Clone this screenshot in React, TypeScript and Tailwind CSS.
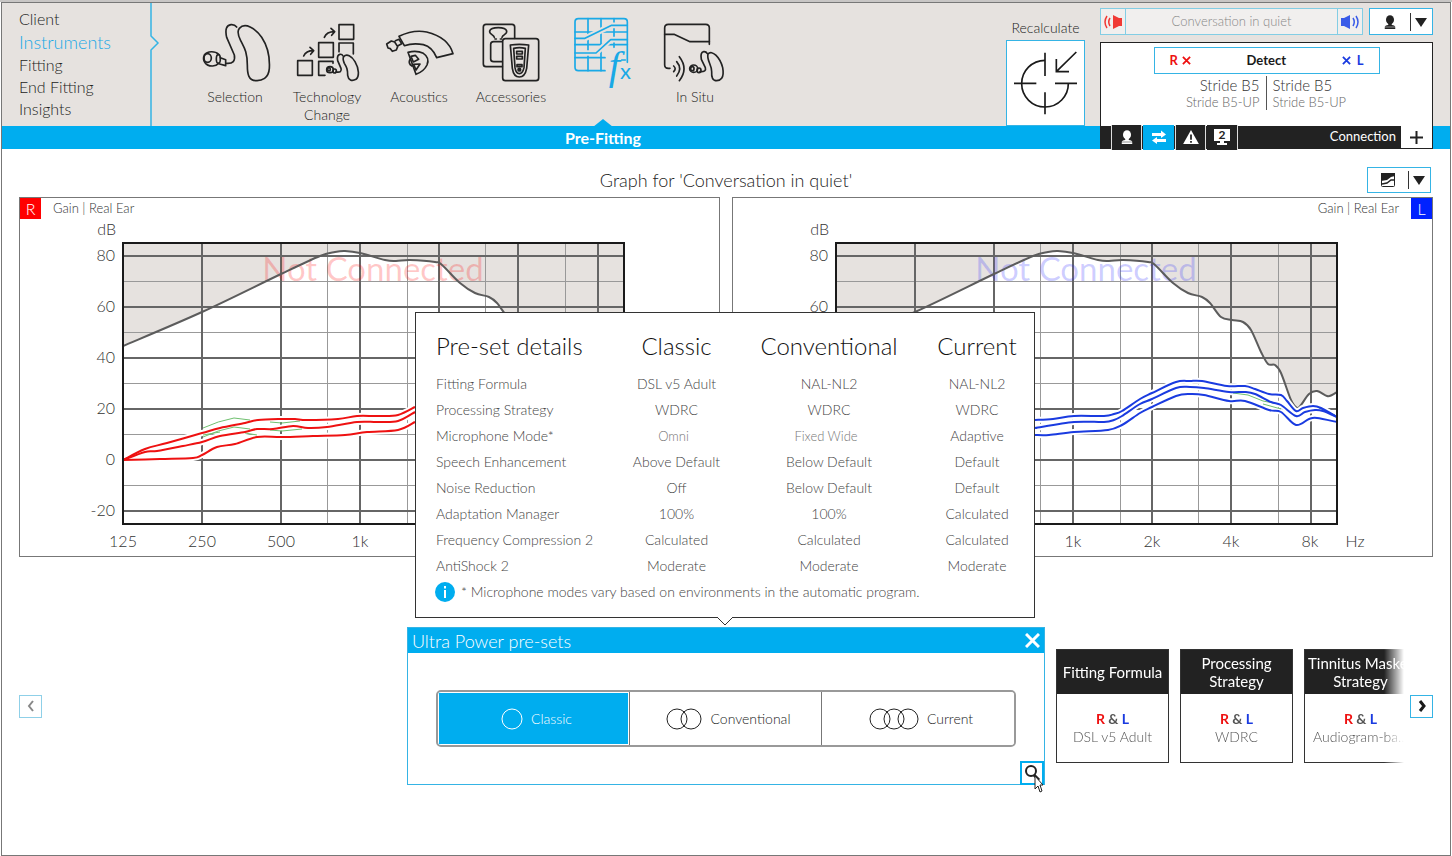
import React, { useState } from 'react';
import clsx from 'clsx';

type Point = [number, number];

const NAV_ITEMS = ['Client', 'Instruments', 'Fitting', 'End Fitting', 'Insights'];

const DETAILS = [
    ['Fitting Formula', 'DSL v5 Adult', 'NAL-NL2', 'NAL-NL2'],
    ['Processing Strategy', 'WDRC', 'WDRC', 'WDRC'],
    ['Microphone Mode*', 'Omni', 'Fixed Wide', 'Adaptive'],
    ['Speech Enhancement', 'Above Default', 'Below Default', 'Default'],
    ['Noise Reduction', 'Off', 'Below Default', 'Default'],
    ['Adaptation Manager', '100%', '100%', 'Calculated'],
    ['Frequency Compression 2', 'Calculated', 'Calculated', 'Calculated'],
    ['AntiShock 2', 'Moderate', 'Moderate', 'Moderate'],
];

const CARDS = [
    { title: 'Fitting Formula', value: 'DSL v5 Adult' },
    { title: 'Processing Strategy', value: 'WDRC' },
    { title: 'Tinnitus Masker Strategy', value: 'Audiogram-ba...' },
];

const LIMIT: Point[] = [
    [103, 127], [182, 93], [261, 55], [300, 37], [315, 33], [325, 32], [340, 34], [365, 41], [376, 42],
    [390, 41], [415, 43], [422, 46], [440, 64], [455, 74], [469, 78], [477, 84], [488, 98], [499, 101],
    [510, 103], [518, 111], [528, 133], [535, 145], [542, 146], [548, 154], [558, 181], [564, 189],
    [568, 186], [576, 175], [584, 172], [594, 177], [599, 176], [604, 173],
];

const RIGHT_CURVES: Point[][] = [
    [
        [103, 241], [125, 230], [147, 224], [182, 214], [200, 209], [225, 204], [238, 201], [262, 200],
        [275, 200], [287, 201], [318, 200], [337, 197], [358, 197], [378, 196], [395, 188],
    ],
    [
        [103, 241], [125, 233], [137, 232], [163, 227], [182, 223], [200, 217], [225, 213], [237, 210],
        [253, 210], [273, 207], [288, 209], [307, 208], [337, 203], [358, 203], [378, 202], [395, 193],
    ],
    [
        [103, 241], [140, 240], [173, 239], [182, 236], [197, 228], [215, 225], [237, 218], [262, 218],
        [293, 217], [325, 216], [347, 213], [378, 211], [395, 203],
    ],
];

const LEFT_CURVES: Point[][] = [
    [
        [302, 201], [320, 200], [341, 197], [371, 197], [381, 195], [389, 192], [407, 180], [419, 174],
        [443, 163], [457, 162], [469, 162], [494, 167], [512, 167], [522, 170], [536, 175], [548, 176],
        [554, 182], [563, 192], [570, 189], [580, 187], [588, 189], [604, 198],
    ],
    [
        [302, 209], [341, 203], [371, 203], [381, 201], [389, 197], [407, 185], [419, 180], [443, 169],
        [457, 168], [471, 169], [496, 173], [512, 173], [522, 175], [538, 183], [548, 186], [563, 197],
        [572, 193], [582, 191], [590, 192], [604, 198],
    ],
    [
        [302, 216], [316, 216], [341, 213], [375, 211], [389, 206], [407, 194], [419, 188], [443, 177],
        [457, 175], [471, 176], [496, 182], [512, 182], [536, 191], [548, 193], [563, 206], [576, 200],
        [584, 199], [604, 203],
    ],
];

const RIGHT_TARGETS = [
    'M183 209 Q198 202 214 199 L230 201 M250 203 L262 204 L280 202',
    'M183 218 Q198 211 214 208 L230 210 M250 211 L262 212 L282 210',
    'M183 216 L200 213 M225 214 L237 216',
];
const LEFT_TARGETS = ['M500 174 L515 176 L530 182 L546 185', 'M530 185 L548 190', 'M586 189 L602 196'];

// Catmull-Rom through the measured points
const smooth = (pts: Point[]) =>
    pts.reduce((d, p, i) => {
        if (i === 0) return `M${p[0]} ${p[1]}`;
        const a = pts[i - 2] ?? pts[i - 1];
        const b = pts[i - 1];
        const c = pts[i + 1] ?? p;
        return `${d} C${b[0] + (p[0] - a[0]) / 6} ${b[1] + (p[1] - a[1]) / 6} ${p[0] - (c[0] - b[0]) / 6} ${
            p[1] - (c[1] - b[1]) / 6
        } ${p[0]} ${p[1]}`;
    }, '');

const X_MAJOR = [182, 261, 340, 419, 498, 578];
const X_MINOR = [307, 387, 465, 545];
const Y_MAJOR = [37, 88, 139, 190, 241, 292];
const Y_MINOR = [62, 113, 164, 215, 266];

interface ChartProps {
    side: 'R' | 'L';
    curves: Point[][];
    targets: string[];
}

const GainChart: React.FC<ChartProps> = ({ side, curves, targets }) => {
    const right = side === 'R';
    const limit = smooth(LIMIT);

    return (
        <section className="border border-[#777777] bg-white">
            <div className={clsx('flex h-[21px] items-center gap-3', !right && 'flex-row-reverse')}>
                <span
                    className={clsx(
                        'flex h-[21px] w-[21px] items-center justify-center text-base text-white',
                        right ? 'bg-[#ff0000]' : 'bg-[#0022ff]'
                    )}
                >
                    {side}
                </span>
                <span className="text-[13px] text-[#333333]">Gain | Real Ear</span>
            </div>
            <svg viewBox="0 0 699 337" className="block w-full" role="img" aria-label="Gain graph">
                <path d={`${limit} V24 H103 Z`} fill="#e6e2df" />
                <g stroke="#999999" strokeWidth="1">
                    {X_MINOR.map((x) => (
                        <path key={x} d={`M${x + 0.5} 24 V305`} />
                    ))}
                    {Y_MINOR.map((y) => (
                        <path key={y} d={`M103 ${y + 0.5} H604`} />
                    ))}
                </g>
                <g stroke="#666666" strokeWidth="2">
                    {X_MAJOR.map((x) => (
                        <path key={x} d={`M${x} 24 V305`} />
                    ))}
                    {Y_MAJOR.map((y) => (
                        <path key={y} d={`M103 ${y} H604`} />
                    ))}
                </g>
                <text
                    x="353"
                    y="62"
                    textAnchor="middle"
                    fontSize="33"
                    fontWeight="400"
                    fill={right ? '#ff0000' : '#2222ff'}
                    fillOpacity="0.22"
                >
                    Not Connected
                </text>
                <path d={limit} fill="none" stroke="#5c5c5c" strokeWidth="2" />
                {curves.map((c, i) => (
                    <path key={i} d={smooth(c)} fill="none" stroke="#ffffff" strokeWidth="6" />
                ))}
                {targets.map((t) => (
                    <path key={t} d={t} fill="none" stroke="#6fc06f" strokeWidth="1" />
                ))}
                {curves.map((c, i) => (
                    <path key={i} d={smooth(c)} fill="none" stroke={right ? '#ee1111' : '#1a3be0'} strokeWidth="2" />
                ))}
                <rect x="103" y="24" width="501" height="281" fill="none" stroke="#1a1a1a" strokeWidth="2" />
                <g fontSize="16" fill="#333333" textAnchor="end">
                    <text x="96" y="16">
                        dB
                    </text>
                    {[80, 60, 40, 20, 0, -20].map((v, i) => (
                        <text key={v} x="95" y={42 + i * 51}>
                            {v}
                        </text>
                    ))}
                </g>
                <g fontSize="16" fill="#333333" textAnchor="middle">
                    {['125', '250', '500', '1k', '2k', '4k', '8k'].map((v, i) => (
                        <text key={v} x={103 + i * 79} y="328">
                            {v}
                        </text>
                    ))}
                    <text x="622" y="328">
                        Hz
                    </text>
                </g>
            </svg>
        </section>
    );
};

interface ToolIconProps {
    box: string;
    children: React.ReactNode;
}

const ToolIcon: React.FC<ToolIconProps> = ({ box, children }) => (
    <svg
        viewBox={box}
        className="h-[75px] w-[92px] overflow-visible"
        fill="none"
        stroke="currentColor"
        strokeWidth="5"
        strokeLinecap="round"
        strokeLinejoin="round"
    >
        {children}
    </svg>
);

const TOOLS = [
    {
        label: 'Selection',
        icon: (
            <ToolIcon box="567 39 276 225">
                <path d="M680 190 Q708 192 703 165 L680 112 Q672 76 693 74 Q704 73 710 81" />
                <path d="M718 85 C735 66 765 84 785 112 C805 142 810 170 808 205 C806 235 785 243 768 242 C745 241 742 222 742 195 C742 155 732 142 722 122 C713 104 712 92 718 85Z" />
                <path d="M656 163 C646 153 622 152 613 165 C606 180 616 199 638 198 C648 197 653 193 656 190" />
                <ellipse cx="623" cy="174" rx="11" ry="13" />
                <ellipse cx="655" cy="177" rx="6" ry="13" />
                <path d="M661 173 L677 179 V197 L659 192" />
            </ToolIcon>
        ),
    },
    {
        label: 'Technology Change',
        icon: (
            <ToolIcon box="843 39 276 225">
                <rect x="893" y="182" width="44" height="44" />
                <rect x="956" y="128" width="44" height="44" />
                <rect x="1017" y="74" width="44" height="44" />
                <path d="M1017 155 V129 H1060 V162 M975 226 H956 V184 H999 V190" />
                <path d="M911 168 Q918 152 940 152 M930 142 L941 152 L932 163 M973 112 Q980 95 1003 95 M993 85 L1004 95 L995 106" />
                <path d="M1031 170 C1040 160 1055 168 1065 185 C1078 207 1078 230 1068 238 C1055 245 1045 240 1043 226 C1043 207 1040 202 1033 190 C1029 180 1028 174 1031 170Z" />
                <path d="M1008 216 Q1027 219 1023 205 L1013 182 Q1010 165 1020 163 Q1026 162 1029 168" />
                <ellipse cx="990" cy="209" rx="10" ry="9" />
                <ellipse cx="987" cy="208" rx="4" ry="5" />
                <ellipse cx="1004" cy="213" rx="5" ry="6" />
            </ToolIcon>
        ),
    },
    {
        label: 'Acoustics',
        icon: (
            <ToolIcon box="9 39 276 225">
                <path d="M87 109 Q130 88 170 96 Q235 112 249 161 L200 173 Q187 141 160 134 Q130 128 103 137 Z" />
                <path d="M50 132 L64 123 L74 126 L83 140 L79 150 L67 154 L61 146 L54 144 Z M76 122 L87 118 L95 131 L84 137" />
                <path d="M114 157 Q140 150 160 160 Q180 173 171 195 Q162 214 138 223 Z" />
                <path d="M123 169 L136 166 L146 178 L130 186 Z M131 193 L150 192 L138 210 Z M120 178 Q113 190 126 198" />
            </ToolIcon>
        ),
    },
    {
        label: 'Accessories',
        icon: (
            <ToolIcon box="285 39 276 225">
                <path d="M397 200 H348 Q340 200 340 192 V81 Q340 73 348 73 H426 Q434 73 434 81 V115" />
                <path d="M373 112 Q372 107 366 104 Q358 99 359 93 Q362 83 385 83 Q407 83 410 93 Q411 99 403 104 Q397 107 396 112 M375 117 H379 M391 117 H395" />
                <path d="M396 185 H371 Q362 185 362 177 V133 Q362 125 371 125 H396" />
                <rect x="398" y="116" width="108" height="126" rx="8" />
                <path d="M421 135 Q448 131 476 135 L470 205 Q465 231 448 231 Q431 231 427 205 Z" />
                <path d="M431 145 Q448 141 466 145 L462 203 Q458 221 448 221 Q438 221 435 203 Z" />
                <rect x="440" y="154" width="17" height="8" />
                <rect x="440" y="169" width="17" height="8" />
                <rect x="441" y="194" width="15" height="6" />
                <circle cx="448" cy="209" r="4" fill="currentColor" />
            </ToolIcon>
        ),
    },
    {
        label: 'Pre-Fitting',
        icon: (
            <ToolIcon box="561 39 276 225">
                <path d="M654 56 V212 M693 56 V212 M732 56 V142 M615 96 H772 M615 134 H772 M615 173 H705 M755 180 H766" />
                <path d="M618 115 H645 L725 76 H769 M618 159 H678 L722 119 H769" stroke="#e6e2df" strokeWidth="17" strokeLinecap="butt" />
                <path d="M615 115 H645 L725 76 H772 M615 159 H678 L722 119 H772" />
                <path d="M772 187 V66 Q772 56 762 56 H625 Q615 56 615 66 V202 Q615 212 625 212 H705" />
                <text
                    x="716"
                    y="237"
                    fontSize="122"
                    fontStyle="italic"
                    fontFamily="Liberation Serif, serif"
                    fill="currentColor"
                    stroke="none"
                >
                    f
                </text>
                <text x="750" y="237" fontSize="66" fontWeight="400" fill="currentColor" stroke="none">
                    x
                </text>
            </ToolIcon>
        ),
    },
    {
        label: 'In Situ',
        icon: (
            <ToolIcon box="837 39 276 225">
                <path d="M1018 133 V84 Q1018 73 1007 73 H895 Q884 73 884 84 V195 Q884 205 895 205 H900" />
                <path d="M884 103 H912 L960 125 H1018" />
                <path d="M911 198 Q920 206 911 215 M920 185 Q938 206 920 228 M928 170 Q956 206 928 242" />
                <path d="M1014 162 C1026 148 1050 172 1058 203 C1064 236 1050 242 1040 242 C1028 242 1024 232 1025 215 C1026 195 1009 180 1014 162Z" />
                <path d="M990 215 Q1010 216 1006 203 L994 178 Q990 157 1001 155 Q1008 154 1012 161" />
                <ellipse cx="971" cy="206" rx="12" ry="11" />
                <ellipse cx="967" cy="206" rx="5" ry="6" />
                <ellipse cx="987" cy="211" rx="6" ry="7" />
            </ToolIcon>
        ),
    },
];

const PersonIcon: React.FC = () => (
    <svg viewBox="0 0 16 16" className="h-[14px] w-[14px]" fill="currentColor">
        <ellipse cx="8" cy="5.5" rx="4.6" ry="5.2" />
        <path d="M6 9 H10 V11.5 Q14 12 14 13.5 H2 Q2 12 6 11.5 Z" />
        <rect x="2" y="14" width="12" height="2" />
    </svg>
);

const Speaker: React.FC<{ className: string }> = ({ className }) => (
    <svg viewBox="0 0 20 18" className={clsx('h-[18px] w-5', className)} fill="currentColor">
        <path d="M1 5 H4 L10 2 V16 L4 13 H1 Z" />
        <path d="M13 5 Q15.5 9 13 13 M16 3 Q20 9 16 15" fill="none" stroke="currentColor" strokeWidth="1.5" />
    </svg>
);

const SplitButton: React.FC<{ label: string; children: React.ReactNode; className?: string }> = ({
    label,
    children,
    className,
}) => (
    <button
        aria-label={label}
        className={clsx('flex w-16 items-center border border-[#35b4e5] bg-white text-[#222222]', className)}
    >
        <span className="flex flex-1 justify-center">{children}</span>
        <span className="h-[18px] w-px bg-[#333333]" />
        <svg viewBox="0 0 20 12" className="mr-px h-3 w-5" fill="currentColor">
            <path d="M4 2 H16 L10 11 Z" />
        </svg>
    </button>
);

const TAB = 'flex h-[25px] w-[31px] items-center justify-center text-white';

const Header: React.FC = () => (
    <header className="grid grid-cols-[148px_1fr_auto_auto] grid-rows-[123px_23px] bg-[#e6e2df]">
        <nav className="pt-[5px] pl-[17px]">
            <ul className="text-base text-[#222222]">
                {NAV_ITEMS.map((item) => {
                    const active = item === 'Instruments';
                    return (
                        <li key={item} className={clsx('flex items-center', active ? 'h-6' : 'h-[22px]')}>
                            <a href="#" className={active ? 'text-lg text-[#1aa9e6]' : ''}>
                                {item}
                            </a>
                        </li>
                    );
                })}
            </ul>
        </nav>
        <div className="flex">
            <svg viewBox="0 0 10 123" className="h-[123px] w-[10px]" fill="none" stroke="#35b4e5" strokeWidth="1.5">
                <path d="M1 0 V33 L8 40 L1 47 V123" />
            </svg>
            <div className="flex pt-[10px] pl-[29px]">
                {TOOLS.map(({ label, icon }) => {
                    const active = label === 'Pre-Fitting';
                    return (
                        <button
                            key={label}
                            aria-label={label}
                            className={clsx(
                                'flex w-[92px] flex-col items-center text-sm leading-[18px]',
                                active ? 'text-[#1aa9e6]' : 'text-[#222222]'
                            )}
                        >
                            {icon}
                            {!active && <span className="px-2">{label}</span>}
                        </button>
                    );
                })}
            </div>
        </div>
        <div className="mr-[15px] flex w-[79px] flex-col items-center pt-[15px]">
            <span className="h-[22px] text-sm text-[#222222]">Recalculate</span>
            <button aria-label="Recalculate" className="border border-[#35b4e5] bg-white text-[#1a1a1a]">
                <svg viewBox="52 123 231 252" className="h-[84px] w-[77px]" fill="none" stroke="currentColor" strokeWidth="5">
                    <path d="M166 181 A70 70 0 1 0 236 250" />
                    <path d="M166 158 V228 M166 277 V343 M73 250 H140 M196 250 H262 M260 156 L200 215 M200 177 V215 H238" />
                </svg>
            </button>
        </div>
        <div className="col-span-full row-start-2 bg-[#00adef] pl-[555px]">
            <div className="relative flex h-full w-[92px] items-center justify-center text-base font-bold whitespace-nowrap text-white">
                <svg viewBox="0 0 20 8" className="absolute -top-[7px] h-2 w-5" fill="#00adef">
                    <path d="M10 0 L20 8 H0 Z" />
                </svg>
                Pre-Fitting
            </div>
        </div>
        <div className="col-start-4 row-span-2 row-start-1 mr-[17px] flex w-[333px] flex-col gap-[7px] pt-[5px]">
            <div className="flex h-[27px] gap-1.5">
                <div className="flex flex-1 items-center border border-[#83cde4] bg-[#f1efee]">
                    <span className="flex h-full w-[25px] items-center justify-center border-r border-[#83cde4]">
                        <Speaker className="rotate-180 text-[#f03a35]" />
                    </span>
                    <span className="flex-1 text-center text-[13px] text-[#888888]">Conversation in quiet</span>
                    <span className="flex h-full w-[25px] items-center justify-center border-l border-[#83cde4]">
                        <Speaker className="text-[#3a5be8]" />
                    </span>
                </div>
                <SplitButton label="Client view">
                    <PersonIcon />
                </SplitButton>
            </div>
            <div className="flex flex-1 flex-col border border-[#222222] bg-white">
                <button className="mx-auto mt-1 flex h-[27px] w-[226px] items-center justify-between border border-[#35b4e5] px-[15px] text-[13px] font-bold text-[#1a1a1a]">
                    <span className="flex items-center gap-1 text-[#ee1111]">
                        R
                        <svg viewBox="0 0 10 10" className="h-[9px] w-[9px]" stroke="currentColor" strokeWidth="2">
                            <path d="M1 1 L9 9 M9 1 L1 9" />
                        </svg>
                    </span>
                    <span>Detect</span>
                    <span className="flex items-center gap-1.5 text-[#1a3be0]">
                        <svg viewBox="0 0 10 10" className="h-[9px] w-[9px]" stroke="currentColor" strokeWidth="2">
                            <path d="M1 1 L9 9 M9 1 L1 9" />
                        </svg>
                        L
                    </span>
                </button>
                <div className="mt-[2px] grid grid-cols-2 text-[15px] leading-[18px] text-[#333333]">
                    <div className="border-r border-[#555555] pr-1.5 text-right">
                        <p>Stride B5</p>
                        <p className="text-[13px] leading-4 text-[#666666]">Stride B5-UP</p>
                    </div>
                    <div className="pl-1.5">
                        <p>Stride B5</p>
                        <p className="text-[13px] leading-4 text-[#666666]">Stride B5-UP</p>
                    </div>
                </div>
                <div className="mt-auto flex h-[22px] items-center gap-px bg-[#222222] pl-[10px]">
                    <button aria-label="Client" className={clsx(TAB, 'border-x border-[#dddddd] bg-[#222222]')}>
                        <PersonIcon />
                    </button>
                    <button aria-label="Connection" className={clsx(TAB, 'bg-[#00adef]')}>
                        <svg viewBox="0 0 16 14" className="h-[14px] w-4" fill="currentColor">
                            <path d="M1 3 H10 V0.5 L15 4.5 L10 8 V6 H1 Z M15 9 H6 V7 L1 10.5 L6 14 V12 H15 Z" />
                        </svg>
                    </button>
                    <button aria-label="Warnings" className={clsx(TAB, 'border-x border-[#dddddd] bg-[#222222]')}>
                        <svg viewBox="0 0 18 16" className="h-[14px] w-4">
                            <path d="M9 0 L18 16 H0 Z" fill="currentColor" />
                            <path d="M9 5 V11 M9 12.5 V14.5" stroke="#222222" strokeWidth="2" />
                        </svg>
                    </button>
                    <button aria-label="Screens" className={clsx(TAB, 'border-r border-[#dddddd] bg-[#222222]')}>
                        <svg viewBox="0 0 18 16" className="h-4 w-[18px]">
                            <path d="M1 0 H17 V12 H11 V14 H14 V16 H4 V14 H7 V12 H1 Z" fill="currentColor" />
                            <text x="9" y="10" textAnchor="middle" fontSize="12" fontWeight="bold" fill="#222222">
                                2
                            </text>
                        </svg>
                    </button>
                    <span className="ml-auto pr-1 text-[13px] font-normal text-white">Connection</span>
                    <button aria-label="Expand" className="flex h-[22px] w-[31px] items-center justify-center bg-white text-[#222222]">
                        <svg viewBox="0 0 13 13" className="h-[13px] w-[13px]" stroke="currentColor" strokeWidth="2">
                            <path d="M6.5 0 V13 M0 6.5 H13" />
                        </svg>
                    </button>
                </div>
            </div>
        </div>
    </header>
);

const PresetDetails: React.FC = () => (
    <div className="absolute right-[9px] bottom-full left-[7px] mb-[10px] border border-[#333333] bg-white pt-2 pb-[13px] pl-5">
        <table className="w-full table-fixed text-center text-sm text-[#444444]">
            <colgroup>
                <col className="w-[179px]" />
                <col className="w-[123px]" />
                <col className="w-[182px]" />
                <col />
            </colgroup>
            <thead>
                <tr className="h-[50px] text-2xl text-[#111111]">
                    <th className="p-0 text-left font-light">Pre-set details</th>
                    <th className="p-0 font-light">Classic</th>
                    <th className="p-0 font-light">Conventional</th>
                    <th className="p-0 font-light">Current</th>
                </tr>
            </thead>
            <tbody>
                {DETAILS.map(([name, ...values]) => (
                    <tr key={name} className="h-[26px]">
                        <th className="p-0 text-left font-light">{name}</th>
                        {values.map((v, i) => (
                            <td
                                key={i}
                                className={clsx('p-0', name === 'Microphone Mode*' && i < 2 && 'pr-1.5 text-[13px] text-[#777777]')}
                            >
                                {v}
                            </td>
                        ))}
                    </tr>
                ))}
            </tbody>
        </table>
        <p className="-ml-px flex h-[25px] items-center gap-1.5 text-sm text-[#444444]">
            <svg viewBox="0 0 20 20" className="h-5 w-5">
                <circle cx="10" cy="10" r="10" fill="#00adef" />
                <path d="M10 4 V6.5 M10 8 V16" stroke="#ffffff" strokeWidth="2" />
            </svg>
            * Microphone modes vary based on environments in the automatic program.
        </p>
        <svg viewBox="0 0 18 9" className="absolute top-full left-1/2 -ml-[9px] h-[9px] w-[18px]" fill="none">
            <path d="M1 0 L9 8 L17 0" fill="#ffffff" stroke="#333333" />
            <path d="M2 0 H16" stroke="#ffffff" strokeWidth="2" />
        </svg>
    </div>
);

const PRESETS = ['Classic', 'Conventional', 'Current'];

const PresetPanel: React.FC = () => {
    const [preset, setPreset] = useState('Classic');

    return (
        <section className="relative flex flex-col border border-[#35b4e5] bg-white">
            <PresetDetails />
            <div className="flex h-[25px] items-center justify-between bg-[#00adef] px-1 text-lg text-white">
                <h2>Ultra Power pre-sets</h2>
                <button aria-label="Close">
                    <svg viewBox="0 0 15 15" className="h-[15px] w-[15px]" stroke="currentColor" strokeWidth="3">
                        <path d="M1 1 L14 14 M14 1 L1 14" />
                    </svg>
                </button>
            </div>
            <div className="mx-7 mt-[37px] grid h-[57px] grid-cols-3 divide-x divide-[#777777] overflow-hidden rounded-[5px] border-2 border-[#999999]">
                {PRESETS.map((name, i) => (
                    <button
                        key={name}
                        aria-pressed={preset === name}
                        onClick={() => setPreset(name)}
                        className={clsx(
                            'flex items-center justify-center gap-2 pl-1.5 text-sm',
                            preset === name
                                ? 'bg-[#00adef] text-white shadow-[inset_0_0_0_1px_#ffffff]'
                                : 'bg-white text-[#222222]'
                        )}
                    >
                        <svg viewBox={`0 0 ${22 + i * 14} 22`} className="h-[22px]" fill="none" stroke="currentColor">
                            {PRESETS.slice(0, i + 1).map((p, n) => (
                                <circle key={p} cx={11 + n * 14} cy="11" r="10" />
                            ))}
                        </svg>
                        {name}
                    </button>
                ))}
            </div>
            <button aria-label="Show pre-set details" className="relative -mb-px mt-[14px] self-end border-2 border-[#00adef] bg-white">
                <svg viewBox="0 0 20 20" className="h-5 w-5" fill="none" stroke="#222222">
                    <circle cx="9" cy="8" r="5" strokeWidth="2" />
                    <path d="M12 12 L17 17" strokeWidth="3" />
                </svg>
                <svg viewBox="0 0 10 18" className="absolute top-3 left-3 h-[18px] w-[10px]" fill="#ffffff" stroke="#222222">
                    <path d="M1 1 V14 L4 11 L6 17 L8 16 L6 10 L9 10 Z" />
                </svg>
            </button>
        </section>
    );
};

const ArrowButton: React.FC<{ label: string; d: string; muted?: boolean }> = ({ label, d, muted }) => (
    <button
        aria-label={label}
        className={clsx(
            'flex h-[23px] w-[23px] shrink-0 items-center justify-center border bg-white',
            muted ? 'border-[#8fd0e8] text-[#888888]' : 'border-[#35b4e5] text-[#1a1a1a]'
        )}
    >
        <svg viewBox="0 0 14 14" className="h-[14px] w-[14px]" fill="none" stroke="currentColor" strokeWidth={muted ? 2 : 3}>
            <path d={d} />
        </svg>
    </button>
);

const App: React.FC = () => (
    <div className="flex min-h-screen flex-col border-t-2 border-[#c8c6c5] bg-white px-px font-[Lato,sans-serif] font-light">
        <div className="flex-1 border border-[#777777]">
            <Header />
            <main className="px-[17px]">
                <div className="mt-[18px] mb-1 grid h-[26px] grid-cols-[1fr_auto_1fr] items-center">
                    <h1 className="col-start-2 text-lg leading-6 text-[#222222]">Graph for 'Conversation in quiet'</h1>
                    <SplitButton label="Graph view" className="mr-0.5 h-[26px] justify-self-end">
                        <svg viewBox="0 0 14 14" className="h-[14px] w-[14px]">
                            <rect x="0.5" y="0.5" width="13" height="13" rx="1" fill="#ffffff" stroke="#222222" />
                            <path d="M0 0 H14 V3 L10 4 L6 7 L0 8 Z" fill="#222222" />
                            <path d="M1 11 L6 10 L10 7 L13 7" fill="none" stroke="#222222" strokeWidth="1.5" />
                        </svg>
                    </SplitButton>
                </div>
                <div className="grid grid-cols-2 gap-3">
                    <GainChart side="R" curves={RIGHT_CURVES} targets={RIGHT_TARGETS} />
                    <GainChart side="L" curves={LEFT_CURVES} targets={LEFT_TARGETS} />
                </div>
                <div className="mt-[70px] grid grid-cols-[1fr_638px_1fr] items-center">
                    <ArrowButton label="Previous" d="M9 2 L5 7 L9 12" muted />
                    <PresetPanel />
                    <div className="flex min-w-0 items-center gap-1.5 pl-[11px]">
                        <div className="flex min-w-0 flex-1 gap-[11px] overflow-hidden [mask-image:linear-gradient(to_right,#000_calc(100%-20px),transparent)]">
                            {CARDS.map(({ title, value }) => (
                                <article key={title} className="h-[114px] w-[113px] shrink-0 border border-[#333333] bg-white text-center">
                                    <h3 className="flex h-11 items-center justify-center bg-[#222222] text-[15px] leading-[18px] font-normal text-white">
                                        {title}
                                    </h3>
                                    <p className="mt-4 text-sm leading-[18px] font-bold text-[#555555]">
                                        <span className="text-[#ee1111]">R</span> &amp; <span className="text-[#1a3be0]">L</span>
                                    </p>
                                    <p className="text-sm leading-[18px] text-[#555555]">{value}</p>
                                </article>
                            ))}
                        </div>
                        <ArrowButton label="Next" d="M5 2 L9 7 L5 12" />
                    </div>
                </div>
            </main>
        </div>
    </div>
);

export default App;
